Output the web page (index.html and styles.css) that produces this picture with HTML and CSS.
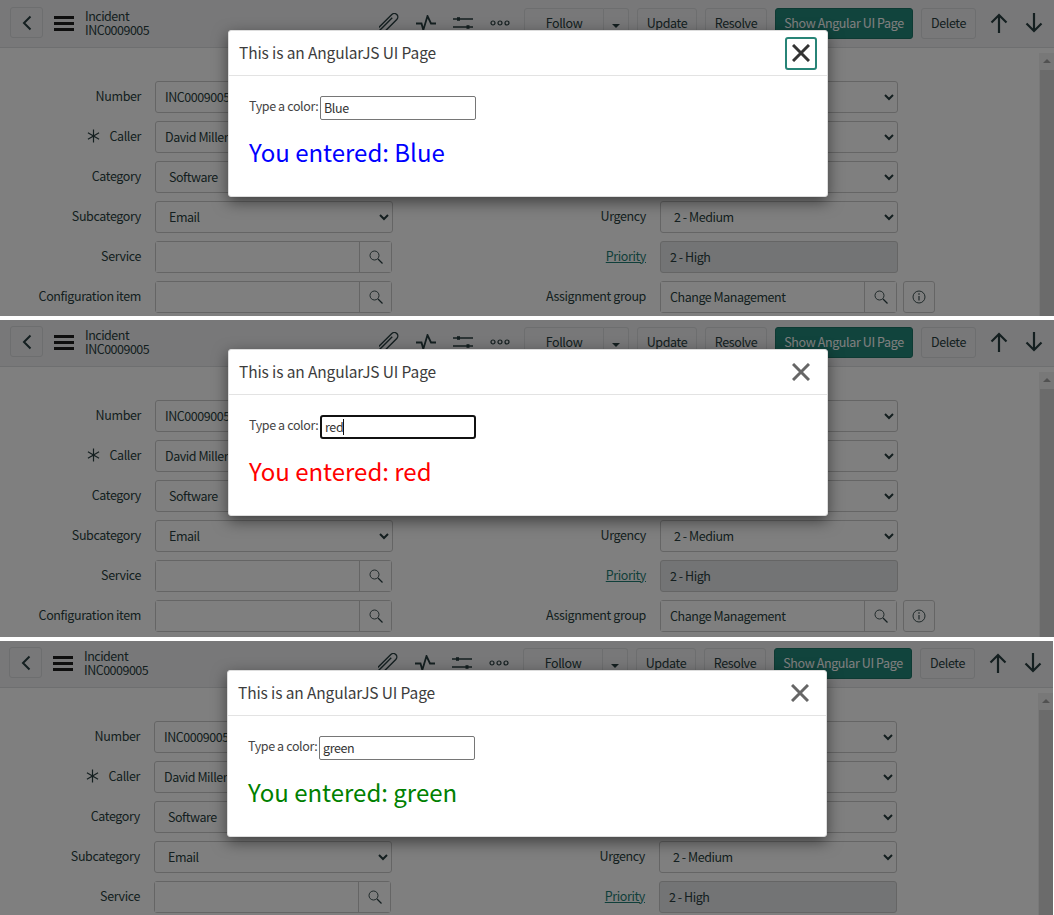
FILE: index.html
```html
<!DOCTYPE html>
<html lang="en">
<head>
    <meta charset="UTF-8">
    <title>AngularJS UI Page</title>
    <link rel="stylesheet" href="styles.css">
</head>
<body>
    <svg class="icon-defs" width="0" height="0">
        <symbol id="i-back" viewBox="0 0 12 18"><path d="M9.500 2.500 3 9l6.500 6.500" fill="none" stroke="currentColor" stroke-width="2"/></symbol>
        <symbol id="i-menu" viewBox="0 0 20 15"><path d="M0 1.500h20M0 7.500h20M0 13.500h20" fill="none" stroke="currentColor" stroke-width="3"/></symbol>
        <symbol id="i-clip" viewBox="0 0 20 20"><g transform="translate(10 10) rotate(45)"><path d="M-4 14V-8a3.500 3.500 0 0 1 7 0V12a2.200 2.200 0 0 1-4.400 0V-6" fill="none" stroke="currentColor" stroke-width="1.400"/></g></symbol>
        <symbol id="i-pulse" viewBox="0 0 20 16"><path d="M0 8.500h5.500l1.800 6.500L11.500 1l3.500 7.500h5" fill="none" stroke="currentColor" stroke-width="1.800"/></symbol>
        <symbol id="i-sliders" viewBox="0 0 20 12"><path d="M0 2h20M0 10h20" fill="none" stroke="currentColor" stroke-width="1.500"/><rect x="4" y=".2" width="3" height="3.600" fill="currentColor"/><rect x="13.500" y="8.200" width="3" height="3.600" fill="currentColor"/></symbol>
        <symbol id="i-dots" viewBox="0 0 20 6"><g fill="none" stroke="currentColor" stroke-width="1.200"><circle cx="3" cy="3" r="2"/><circle cx="10" cy="3" r="2"/><circle cx="17" cy="3" r="2"/></g></symbol>
        <symbol id="i-up" viewBox="0 0 18 20"><path d="M9 20V2M1.500 9.500 9 2l7.500 7.500" fill="none" stroke="currentColor" stroke-width="2.200"/></symbol>
        <symbol id="i-down" viewBox="0 0 18 20"><path d="M9 0v18M1.500 10.500 9 18l7.500-7.500" fill="none" stroke="currentColor" stroke-width="2.200"/></symbol>
        <symbol id="i-star" viewBox="0 0 14 14"><path d="M7 0v14M1 3.500l12 7M13 3.500l-12 7" fill="none" stroke="currentColor" stroke-width="1.300"/></symbol>
        <symbol id="i-search" viewBox="0 0 14 14"><circle cx="5.500" cy="5.500" r="4.500" fill="none" stroke="currentColor" stroke-width=".9"/><path d="m9 9 4.500 4.500" fill="none" stroke="currentColor" stroke-width="1.200"/></symbol>
        <symbol id="i-info" viewBox="0 0 14 14"><circle cx="7" cy="7" r="6" fill="none" stroke="currentColor" stroke-width=".9"/><path d="M7 6v4.500" stroke="currentColor" stroke-width="1.100"/><circle cx="7" cy="4" r=".8" fill="currentColor"/></symbol>
        <symbol id="i-close" viewBox="0 0 18 18"><path d="m1 1 16 16M17 1 1 17" fill="none" stroke="currentColor" stroke-width="3"/></symbol>
    </svg>

    <section class="shot">
        <div class="app">
            <header class="topbar">
                <button class="btn btn-back"><svg class="ico-back"><use href="#i-back"/></svg></button>
                <svg class="ico-menu"><use href="#i-menu"/></svg>
                <div class="record"><div>Incident</div><div>INC0009005</div></div>
                <div class="tools">
                    <svg class="ico-clip"><use href="#i-clip"/></svg>
                    <svg class="ico-pulse"><use href="#i-pulse"/></svg>
                    <svg class="ico-sliders"><use href="#i-sliders"/></svg>
                    <svg class="ico-dots"><use href="#i-dots"/></svg>
                </div>
                <div class="actions">
                    <div class="split"><button class="btn btn-follow">Follow</button><button class="btn btn-caret"><span class="caret-down"></span></button></div>
                    <button class="btn btn-update">Update</button>
                    <button class="btn btn-resolve">Resolve</button>
                    <button class="btn btn-primary">Show Angular UI Page</button>
                    <button class="btn btn-delete">Delete</button>
                </div>
                <svg class="ico-up"><use href="#i-up"/></svg>
                <svg class="ico-down"><use href="#i-down"/></svg>
            </header>
            <div class="content">
                <form class="form">
                    <label class="lbl">Number</label>
                    <input class="field" value="INC0009005">
                    <span class="lbl"></span>
                    <select class="field"><option></option></select>

                    <label class="lbl"><svg class="ico-star"><use href="#i-star"/></svg>Caller</label>
                    <input class="field" value="David Miller">
                    <span class="lbl"></span>
                    <select class="field"><option></option></select>

                    <label class="lbl">Category</label>
                    <select class="field"><option>Software</option></select>
                    <span class="lbl"></span>
                    <select class="field"><option></option></select>

                    <label class="lbl">Subcategory</label>
                    <select class="field"><option>Email</option></select>
                    <label class="lbl">Urgency</label>
                    <select class="field"><option>2 - Medium</option></select>

                    <label class="lbl">Service</label>
                    <div class="lookup"><input class="lookup-input"><button class="lookup-btn"><svg class="ico-search"><use href="#i-search"/></svg></button></div>
                    <label class="lbl"><a class="lbl-link">Priority</a></label>
                    <input class="field field-readonly" value="2 - High">

                    <label class="lbl">Configuration item</label>
                    <div class="lookup"><input class="lookup-input"><button class="lookup-btn"><svg class="ico-search"><use href="#i-search"/></svg></button></div>
                    <label class="lbl">Assignment group</label>
                    <div class="lookup-row">
                        <div class="lookup"><input class="lookup-input" value="Change Management"><button class="lookup-btn"><svg class="ico-search"><use href="#i-search"/></svg></button></div>
                        <button class="info-btn"><svg class="ico-info"><use href="#i-info"/></svg></button>
                    </div>
                </form>
                <div class="scrollbar"><div class="scroll-up"></div><div class="scroll-thumb"></div></div>
            </div>
            <div class="overlay">
                <div class="dialog">
                    <div class="dialog-head">
                        <h1 class="dialog-title">This is an AngularJS UI Page</h1>
                        <button class="dialog-close dialog-close-focus"><svg class="ico-close"><use href="#i-close"/></svg></button>
                    </div>
                    <div class="dialog-body">
                        <div class="color-row"><span class="color-label">Type a color:</span><input class="color-input" value="Blue"></div>
                        <p class="echo echo-blue">You entered: Blue</p>
                    </div>
                </div>
            </div>
        </div>
    </section>

    <section class="shot shot-second">
        <div class="app">
            <header class="topbar">
                <button class="btn btn-back"><svg class="ico-back"><use href="#i-back"/></svg></button>
                <svg class="ico-menu"><use href="#i-menu"/></svg>
                <div class="record"><div>Incident</div><div>INC0009005</div></div>
                <div class="tools">
                    <svg class="ico-clip"><use href="#i-clip"/></svg>
                    <svg class="ico-pulse"><use href="#i-pulse"/></svg>
                    <svg class="ico-sliders"><use href="#i-sliders"/></svg>
                    <svg class="ico-dots"><use href="#i-dots"/></svg>
                </div>
                <div class="actions">
                    <div class="split"><button class="btn btn-follow">Follow</button><button class="btn btn-caret"><span class="caret-down"></span></button></div>
                    <button class="btn btn-update">Update</button>
                    <button class="btn btn-resolve">Resolve</button>
                    <button class="btn btn-primary">Show Angular UI Page</button>
                    <button class="btn btn-delete">Delete</button>
                </div>
                <svg class="ico-up"><use href="#i-up"/></svg>
                <svg class="ico-down"><use href="#i-down"/></svg>
            </header>
            <div class="content">
                <form class="form">
                    <label class="lbl">Number</label>
                    <input class="field" value="INC0009005">
                    <span class="lbl"></span>
                    <select class="field"><option></option></select>

                    <label class="lbl"><svg class="ico-star"><use href="#i-star"/></svg>Caller</label>
                    <input class="field" value="David Miller">
                    <span class="lbl"></span>
                    <select class="field"><option></option></select>

                    <label class="lbl">Category</label>
                    <select class="field"><option>Software</option></select>
                    <span class="lbl"></span>
                    <select class="field"><option></option></select>

                    <label class="lbl">Subcategory</label>
                    <select class="field"><option>Email</option></select>
                    <label class="lbl">Urgency</label>
                    <select class="field"><option>2 - Medium</option></select>

                    <label class="lbl">Service</label>
                    <div class="lookup"><input class="lookup-input"><button class="lookup-btn"><svg class="ico-search"><use href="#i-search"/></svg></button></div>
                    <label class="lbl"><a class="lbl-link">Priority</a></label>
                    <input class="field field-readonly" value="2 - High">

                    <label class="lbl">Configuration item</label>
                    <div class="lookup"><input class="lookup-input"><button class="lookup-btn"><svg class="ico-search"><use href="#i-search"/></svg></button></div>
                    <label class="lbl">Assignment group</label>
                    <div class="lookup-row">
                        <div class="lookup"><input class="lookup-input" value="Change Management"><button class="lookup-btn"><svg class="ico-search"><use href="#i-search"/></svg></button></div>
                        <button class="info-btn"><svg class="ico-info"><use href="#i-info"/></svg></button>
                    </div>
                </form>
                <div class="scrollbar"><div class="scroll-up"></div><div class="scroll-thumb"></div></div>
            </div>
            <div class="overlay">
                <div class="dialog">
                    <div class="dialog-head">
                        <h1 class="dialog-title">This is an AngularJS UI Page</h1>
                        <button class="dialog-close"><svg class="ico-close"><use href="#i-close"/></svg></button>
                    </div>
                    <div class="dialog-body">
                        <div class="color-row"><span class="color-label">Type a color:</span><div class="color-wrap"><input class="color-input color-input-focus" value="red"><span class="text-caret"></span></div></div>
                        <p class="echo echo-red">You entered: red</p>
                    </div>
                </div>
            </div>
        </div>
    </section>

    <section class="shot shot-third">
        <div class="app">
            <header class="topbar">
                <button class="btn btn-back"><svg class="ico-back"><use href="#i-back"/></svg></button>
                <svg class="ico-menu"><use href="#i-menu"/></svg>
                <div class="record"><div>Incident</div><div>INC0009005</div></div>
                <div class="tools">
                    <svg class="ico-clip"><use href="#i-clip"/></svg>
                    <svg class="ico-pulse"><use href="#i-pulse"/></svg>
                    <svg class="ico-sliders"><use href="#i-sliders"/></svg>
                    <svg class="ico-dots"><use href="#i-dots"/></svg>
                </div>
                <div class="actions">
                    <div class="split"><button class="btn btn-follow">Follow</button><button class="btn btn-caret"><span class="caret-down"></span></button></div>
                    <button class="btn btn-update">Update</button>
                    <button class="btn btn-resolve">Resolve</button>
                    <button class="btn btn-primary">Show Angular UI Page</button>
                    <button class="btn btn-delete">Delete</button>
                </div>
                <svg class="ico-up"><use href="#i-up"/></svg>
                <svg class="ico-down"><use href="#i-down"/></svg>
            </header>
            <div class="content">
                <form class="form">
                    <label class="lbl">Number</label>
                    <input class="field" value="INC0009005">
                    <span class="lbl"></span>
                    <select class="field"><option></option></select>

                    <label class="lbl"><svg class="ico-star"><use href="#i-star"/></svg>Caller</label>
                    <input class="field" value="David Miller">
                    <span class="lbl"></span>
                    <select class="field"><option></option></select>

                    <label class="lbl">Category</label>
                    <select class="field"><option>Software</option></select>
                    <span class="lbl"></span>
                    <select class="field"><option></option></select>

                    <label class="lbl">Subcategory</label>
                    <select class="field"><option>Email</option></select>
                    <label class="lbl">Urgency</label>
                    <select class="field"><option>2 - Medium</option></select>

                    <label class="lbl">Service</label>
                    <div class="lookup"><input class="lookup-input"><button class="lookup-btn"><svg class="ico-search"><use href="#i-search"/></svg></button></div>
                    <label class="lbl"><a class="lbl-link">Priority</a></label>
                    <input class="field field-readonly" value="2 - High">
                </form>
                <div class="scrollbar"><div class="scroll-up"></div><div class="scroll-thumb"></div></div>
            </div>
            <div class="overlay">
                <div class="dialog">
                    <div class="dialog-head">
                        <h1 class="dialog-title">This is an AngularJS UI Page</h1>
                        <button class="dialog-close"><svg class="ico-close"><use href="#i-close"/></svg></button>
                    </div>
                    <div class="dialog-body">
                        <div class="color-row"><span class="color-label">Type a color:</span><input class="color-input" value="green"></div>
                        <p class="echo echo-green">You entered: green</p>
                    </div>
                </div>
            </div>
        </div>
    </section>
</body>
</html>
```

FILE: styles.css
```css
:root {
    --text: #293e40;
    --line: #cbcbcb;
    --head: #f0f1f3;
    --teal: #23887a;
}
* {
    box-sizing: border-box;
}
html, body {
    margin: 0;
    padding: 0;
    background: #fff;
    overflow: hidden;
}
body {
    width: 1054px;
    height: 915px;
    font-family: "Noto Sans CJK SC", sans-serif;
    font-size: 12.5px;
    letter-spacing: -0.38px;
    color: var(--text);
}
input, select, button {
    font: inherit;
    letter-spacing: inherit;
    color: inherit;
}
.icon-defs {
    display: block;
    height: 0;
}
svg {
    flex: none;
}

/* three captures of the same page, stacked */
.shot {
    height: 316px;
    margin-bottom: 4px;
    overflow: hidden;
}
.shot-second {
    height: 317px;
}
.shot-third {
    height: 274px;
    margin-bottom: 0;
}
.shot-second .app {
    margin-top: -1px;
}
.shot-third .app {
    margin: -1px 0 0 -1px;
}
.app {
    position: relative;
    width: 1054px;
    height: 320px;
    background: #fff;
}

/* top bar */
.topbar {
    display: flex;
    align-items: center;
    height: 48px;
    padding: 0 11px 1px 10px;
    background: var(--head);
    border-bottom: 1px solid #dcdee0;
}
.btn {
    flex: none;
    height: 31px;
    padding: 0 0 2px;
    background: var(--head);
    border: 1px solid #dadcde;
    border-radius: 3px;
}
.btn-back {
    display: flex;
    align-items: center;
    justify-content: center;
    align-self: flex-start;
    width: 33px;
    margin-top: 7px;
    padding: 0;
}
.ico-back {
    width: 12px;
    height: 18px;
}
.ico-menu {
    width: 20px;
    height: 15px;
    margin-left: 11px;
    color: #1c1c1c;
}
.record {
    margin-left: 11px;
    line-height: 14px;
    letter-spacing: -0.5px;
}
.tools {
    display: flex;
    align-items: center;
    margin-left: auto;
}
.ico-clip {
    width: 20px;
    height: 20px;
}
.ico-pulse {
    width: 20px;
    height: 16px;
    margin-left: 17px;
}
.ico-sliders {
    width: 20px;
    height: 12px;
    margin-left: 17px;
}
.ico-dots {
    width: 20px;
    height: 6px;
    margin-left: 17px;
}
.actions {
    display: flex;
    gap: 8px;
    margin: 1px 0 0 14px;
}
.split {
    display: flex;
}
.btn-follow {
    width: 80px;
    border-radius: 3px 0 0 3px;
}
.btn-caret {
    width: 25px;
    padding: 0;
    border-left: 0;
    border-radius: 0 3px 3px 0;
}
.caret-down {
    display: inline-block;
    border: 4px solid transparent;
    border-top-color: var(--text);
    border-bottom-width: 0;
    vertical-align: middle;
}
.btn-update {
    width: 60px;
}
.btn-resolve {
    width: 62px;
}
.btn-primary {
    width: 138px;
    background: var(--teal);
    border-color: #1d7466;
    color: #fff;
}
.btn-delete {
    width: 55px;
}
.ico-up {
    width: 18px;
    height: 20px;
    margin-left: 14px;
}
.ico-down {
    width: 18px;
    height: 20px;
    margin-left: 17px;
}

/* form */
.content {
    display: flex;
    justify-content: space-between;
}
.form {
    display: grid;
    grid-template-columns: 141px 238px 239px 238px;
    grid-auto-rows: 32px;
    column-gap: 14px;
    row-gap: 8px;
    align-items: center;
    padding-top: 33px;
}
.lbl {
    display: flex;
    justify-content: flex-end;
    align-items: center;
    line-height: 16px;
    margin-top: -2px;
}
.lbl-link {
    color: #1f7f75;
    text-decoration: underline;
}
.ico-star {
    width: 13px;
    height: 14px;
    margin-right: 9px;
}
.field {
    display: block;
    width: 238px;
    height: 32px;
    padding: 0 9px 2px;
    letter-spacing: -0.46px;
    background-color: #fff;
    border: 1px solid var(--line);
    border-radius: 3px;
    outline: none;
}
.field-readonly {
    background-color: #e6e8ea;
}
.lookup-row {
    display: flex;
    gap: 6px;
}
.lookup {
    flex: none;
    display: flex;
    width: 237px;
    height: 32px;
    border: 1px solid var(--line);
    border-radius: 3px;
}
.lookup-input {
    flex: 1;
    min-width: 0;
    padding: 0 9px 2px;
    letter-spacing: -0.46px;
    background: #fff;
    border: 0;
    outline: none;
}
.lookup-btn {
    display: flex;
    align-items: center;
    justify-content: center;
    width: 32px;
    padding: 0;
    background: #fff;
    border: 0;
    border-left: 1px solid var(--line);
}
.info-btn {
    flex: none;
    display: flex;
    align-items: center;
    justify-content: center;
    width: 32px;
    height: 32px;
    padding: 0;
    background: #fff;
    border: 1px solid var(--line);
    border-radius: 3px;
}
.ico-search, .ico-info {
    width: 14px;
    height: 14px;
}

/* scrollbar */
.scrollbar {
    display: flex;
    flex-direction: column;
    width: 15px;
    height: 300px;
    margin-top: 5px;
    background: #f1f1f1;
}
.scroll-up {
    height: 17px;
    position: relative;
}
.scroll-up::after {
    content: "";
    position: absolute;
    left: 4px;
    top: 6px;
    border: 4px solid transparent;
    border-bottom-color: #a3a3a3;
    border-top-width: 0;
}
.scroll-thumb {
    flex: 1;
    margin-left: 1px;
    background: #d6d6d6;
}

/* modal */
.overlay {
    position: absolute;
    top: 0;
    right: 0;
    bottom: 0;
    left: 0;
    padding: 30px 0 0 228px;
    background: rgba(0, 0, 0, 0.5);
}
.dialog {
    width: 600px;
    height: 167px;
    background: #fff;
    border: 1px solid #ddd;
    border-radius: 3px;
    box-shadow: 0 5px 15px rgba(0, 0, 0, 0.5);
}
.dialog-head {
    display: flex;
    align-items: center;
    justify-content: space-between;
    height: 45px;
    padding: 0 10px;
    border-bottom: 1px solid #e3e3e3;
}
.dialog-title {
    margin: 0 0 2px;
    font-size: 15.5px;
    letter-spacing: -0.13px;
    font-weight: 400;
    color: #3c3c3c;
}
.dialog-close {
    display: flex;
    align-items: center;
    justify-content: center;
    width: 32px;
    height: 33px;
    padding: 0;
    background: none;
    border: 2px solid transparent;
    border-radius: 3px;
    color: #666;
}
.dialog-close-focus {
    border-color: #278477;
    color: #333;
}
.ico-close {
    width: 18px;
    height: 18px;
}
.dialog-body {
    padding: 20px;
}
.color-row {
    display: flex;
    align-items: center;
    height: 24px;
    color: #444;
}
.color-label {
    flex: none;
    width: 71px;
    padding-bottom: 5px;
    line-height: 16px;
}
.color-wrap {
    position: relative;
    display: flex;
}
.color-input {
    width: 156px;
    height: 24px;
    padding: 0 3px 2px;
    background: #fff;
    border: 1px solid #767676;
    border-radius: 2px;
    color: #333;
    outline: none;
}
.color-input-focus {
    border: 2px solid #111;
    border-radius: 3px;
}
.text-caret {
    position: absolute;
    left: 23px;
    top: 4px;
    width: 1px;
    height: 16px;
    background: #111;
}
.echo {
    margin: 12px 0 0;
    font-size: 24px;
    letter-spacing: 0;
    line-height: 40px;
}
.echo-blue {
    color: #0000ff;
}
.echo-red {
    color: #ff0000;
}
.echo-green {
    color: #008000;
}
```
